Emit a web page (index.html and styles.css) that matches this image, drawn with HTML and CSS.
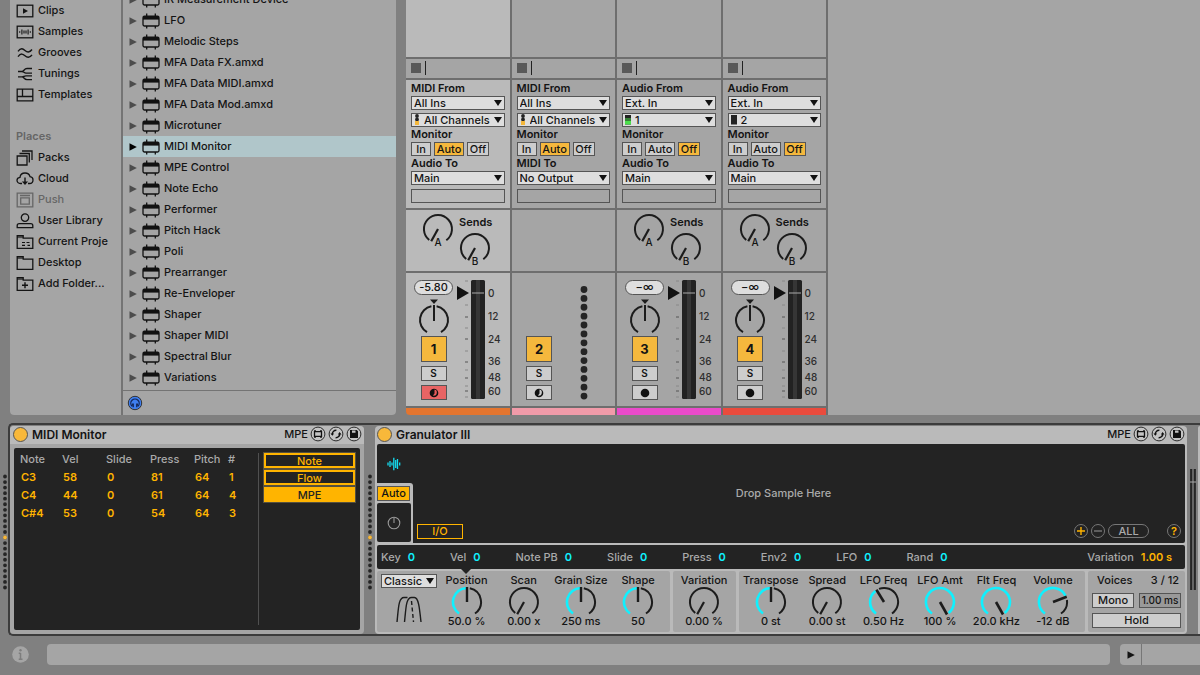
FILE: index.html
```html
<!DOCTYPE html>
<html lang="en">
<head>
<meta charset="utf-8">
<title>Live Set</title>
<link rel="stylesheet" href="styles.css">
</head>
<body>
<svg class="defs" aria-hidden="true">
  <symbol id="i-dev" viewBox="0 0 18 16"><rect x="1" y="3.2" width="16" height="9.8" rx="1.5" fill="none" stroke="#111" stroke-width="1.3"/><path d="M1 3h16v3.6H1z" fill="#111"/><path d="M4.7 .6v3M13.3 .6v3M4.7 13v2.4M13.3 13v2.4" stroke="#111" stroke-width="1.3"/></symbol>
  <symbol id="i-tri" viewBox="0 0 8 8"><path d="M.5 .2 7.8 4 .5 7.8z" fill="currentColor"/></symbol>
  <symbol id="i-clips" viewBox="0 0 18 16"><rect x="1.2" y="2.2" width="15.6" height="11.6" fill="none" stroke="currentColor" stroke-width="1.3"/><path d="M7 5.2 12 8l-5 2.8z" fill="currentColor"/></symbol>
  <symbol id="i-samples" viewBox="0 0 18 16"><rect x="1.2" y="2.2" width="15.6" height="11.6" fill="none" stroke="currentColor" stroke-width="1.3"/><path d="M3.7 7.3v1.4M5.9 5.5v5M8 6.5v3M10 6.5v3M12.1 5.5v5M14.3 7.3v1.4" stroke="currentColor" stroke-width="1.1"/></symbol>
  <symbol id="i-grooves" viewBox="0 0 18 16"><path d="M2 6.4c3-4 5-2.700 7-.9s4.500 2.500 7-1M2 11.700c3-4 5-2.700 7-.9s4.500 2.500 7-1" fill="none" stroke="currentColor" stroke-width="1.4"/></symbol>
  <symbol id="i-tunings" viewBox="0 0 18 16"><path d="M2 5.500h4c2 0 2-3 5-3h5M6 5.500c2 0 2 1.700 4 1.700h6M2 10.800h4c2 0 2-1 4-1h6M6 10.800c2 0 2 2.900 5 2.900h5" fill="none" stroke="currentColor" stroke-width="1.300"/></symbol>
  <symbol id="i-templates" viewBox="0 0 18 16"><path d="M1.200 2.200h15.600v11.600H1.200zM1.200 9.500h15.600M6.500 2.200v7.300" fill="none" stroke="currentColor" stroke-width="1.300"/></symbol>
  <symbol id="i-packs" viewBox="0 0 18 16"><path d="M1.200 6h9.800v9H1.200zM3.500 3.500h9.800v9M6 1h10v9" fill="none" stroke="currentColor" stroke-width="1.300"/></symbol>
  <symbol id="i-cloud" viewBox="0 0 18 16"><path d="M6 12.500H4.500C2.500 12.500 1 11 1 9.300 1 7.600 2.200 6.500 4 6.300 4.300 3.500 6.500 2 9 2c2.400 0 4.400 1.300 5 3.700 1.800.2 3 1.500 3 3.300s-1.300 3.500-3.500 3.500H12" fill="none" stroke="currentColor" stroke-width="1.300"/><path d="M9 6.500v5" stroke="currentColor" stroke-width="1.400"/><path d="M5.900 10.500h6.200L9 14z" fill="currentColor"/></symbol>
  <symbol id="i-push" viewBox="0 0 18 16"><path d="M1.200 1.200h15.600v13.600H1.200zM4.700 5.800h8.600v6.400H4.700zM4 3.500h10" fill="none" stroke="currentColor" stroke-width="1.300"/></symbol>
  <symbol id="i-user" viewBox="0 0 18 16"><circle cx="9" cy="4.600" r="3.700" fill="none" stroke="currentColor" stroke-width="1.300"/><path d="M1.200 14.600v-2c0-1.300 1-2 2-2h11.600c1 0 2 .7 2 2v2z" fill="none" stroke="currentColor" stroke-width="1.300"/></symbol>
  <symbol id="i-folder" viewBox="0 0 18 16"><path d="M1.200 1.700h6v2.400h9.600v10.200H1.200z" fill="none" stroke="currentColor" stroke-width="1.300"/><path d="M1 1.500h6v2.600H1z" fill="currentColor" opacity=".6"/></symbol>
  <symbol id="i-hot" viewBox="0 0 16 16"><circle cx="8" cy="8" r="6.900" fill="#c4c4c4" stroke="#2b2b2b" stroke-width="1"/><path d="M4.500 5.700h7v4.600h-7z" fill="none" stroke="#111" stroke-width="1.300"/><path d="M5 4v1.800M11 4v1.800M5 10.200V12M11 10.200V12" stroke="#111" stroke-width="1.400"/></symbol>
  <symbol id="i-swap" viewBox="0 0 16 16"><circle cx="8" cy="8" r="6.900" fill="#c4c4c4" stroke="#2b2b2b" stroke-width="1"/><path d="M4.300 8.500C4 6 6 4.200 8.400 4.300M11.700 7.500c.3 2.500-1.700 4.300-4.100 4.200" fill="none" stroke="#111" stroke-width="1.400"/><path d="M2.500 7.500h3.600L4.400 9.800zM9.900 8.500h3.600l-2-2.400z" fill="#111"/></symbol>
  <symbol id="i-save" viewBox="0 0 16 16"><circle cx="8" cy="8" r="6.900" fill="#c4c4c4" stroke="#2b2b2b" stroke-width="1"/><path d="M4 4h6.700L12 5.300V12H4z" fill="#111"/><path d="M6 4.500h3.500v2.200H6z" fill="#c4c4c4"/></symbol>
  <symbol id="k-min" viewBox="-16 -16 32 32"><path d="M-8.800 11A14 14 0 1 1 8.300 11.300" fill="none" stroke="#1c1c1c" stroke-width="2"/><path d="M0 0-6.800 12.200" stroke="#1c1c1c" stroke-width="2.200"/></symbol>
  <symbol id="k-mid" viewBox="-16 -16 32 32"><path d="M-8 11.500A14 14 0 0 1-.5-14" fill="none" stroke="#0ff1ff" stroke-width="2.600"/><path d="M2.800-13.700A14 14 0 0 1 8 11.500" fill="none" stroke="#1c1c1c" stroke-width="2"/><path d="M0 0v-15" stroke="#1c1c1c" stroke-width="2.400"/></symbol>
  <symbol id="k-freq" viewBox="-16 -16 32 32"><path d="M-8 11.500A14 14 0 0 1-8.500-11" fill="none" stroke="#0ff1ff" stroke-width="2.600"/><path d="M-5-13.100A14 14 0 0 1 8 11.500" fill="none" stroke="#1c1c1c" stroke-width="2"/><path d="M0 0-7.600-12.300" stroke="#1c1c1c" stroke-width="2.600"/></symbol>
  <symbol id="k-max" viewBox="-16 -16 32 32"><path d="M-8 11.500A14 14 0 1 1 8.600 11" fill="none" stroke="#0ff1ff" stroke-width="2.600"/><path d="M0 0 7 12.500" stroke="#1c1c1c" stroke-width="2.600"/></symbol>
  <symbol id="k-vol" viewBox="-16 -16 32 32"><path d="M-8 11.500A14 14 0 1 1 12.500-6.200" fill="none" stroke="#0ff1ff" stroke-width="2.600"/><path d="M13.900-2A14 14 0 0 1 8 11.500" fill="none" stroke="#1c1c1c" stroke-width="2"/><path d="M0 0 13.700-5.300" stroke="#1c1c1c" stroke-width="2.600"/></symbol>
  <symbol id="k-pan" viewBox="-16 -21 32 36"><path d="M-4-20.500h8L0-16z" fill="#1c1c1c"/><path d="M-7 12.200A14 14 0 0 1-2.600-13.700M2.600-13.700A14 14 0 0 1 7 12.200" fill="none" stroke="#1c1c1c" stroke-width="2"/><path d="M0 1v-16" stroke="#1c1c1c" stroke-width="2"/></symbol>
  <symbol id="fader" viewBox="0 0 30 122"><path d="M0 7v14l12-7z" fill="#111"/><path d="M8 2h3M8 26h3M8 49h3M8 72h3M8 91h3M8 107h3M8 118h3" stroke="#888"/><path d="M8 38h3M8 60h3M8 83h3M8 99h3M8 112h3" stroke="#555"/><rect x="14" y="1" width="14" height="119" rx="1.500" fill="#222"/><path d="M20 1v119M22 1v119" stroke="#555" stroke-width=".8"/><path d="M15 14h12" stroke="#aaa"/></symbol>
  <symbol id="dots" viewBox="0 0 6 116"><path d="M3 2.500v112" stroke="#252525" stroke-width="3.800" stroke-linecap="round" stroke-dasharray="0 5.550"/><circle cx="3" cy="63.500" r="2" fill="#f8b83a"/></symbol>
</svg>

<main class="top">
  <div class="browser">
    <nav class="places">
      <a href="#"><svg><use href="#i-clips"/></svg>Clips</a>
      <a href="#"><svg><use href="#i-samples"/></svg>Samples</a>
      <a href="#"><svg><use href="#i-grooves"/></svg>Grooves</a>
      <a href="#"><svg><use href="#i-tunings"/></svg>Tunings</a>
      <a href="#"><svg><use href="#i-templates"/></svg>Templates</a>
      <h2>Places</h2>
      <a href="#"><svg><use href="#i-packs"/></svg>Packs</a>
      <a href="#"><svg><use href="#i-cloud"/></svg>Cloud</a>
      <a href="#" class="dim"><svg><use href="#i-push"/></svg>Push</a>
      <a href="#"><svg><use href="#i-user"/></svg>User Library</a>
      <a href="#"><svg viewBox="0 0 18 16"><use href="#i-folder"/><path d="M6 8.500h3M10.500 8.500h3M6 11.300h3M11.500 11.300h2.500" stroke="#111" stroke-width="1.200"/></svg>Current Proje</a>
      <a href="#"><svg><use href="#i-folder"/></svg>Desktop</a>
      <a href="#"><svg viewBox="0 0 18 16"><use href="#i-folder"/><path d="M6 9.300h6M9 6.300v6" stroke="#111" stroke-width="1.400"/></svg>Add Folder...</a>
    </nav>
    <section class="content">
      <ul class="files">
        <li><svg class="tri"><use href="#i-tri"/></svg><svg><use href="#i-dev"/></svg>IR Measurement Device</li>
        <li><svg class="tri"><use href="#i-tri"/></svg><svg><use href="#i-dev"/></svg>LFO</li>
        <li><svg class="tri"><use href="#i-tri"/></svg><svg><use href="#i-dev"/></svg>Melodic Steps</li>
        <li><svg class="tri"><use href="#i-tri"/></svg><svg><use href="#i-dev"/></svg>MFA Data FX.amxd</li>
        <li><svg class="tri"><use href="#i-tri"/></svg><svg><use href="#i-dev"/></svg>MFA Data MIDI.amxd</li>
        <li><svg class="tri"><use href="#i-tri"/></svg><svg><use href="#i-dev"/></svg>MFA Data Mod.amxd</li>
        <li><svg class="tri"><use href="#i-tri"/></svg><svg><use href="#i-dev"/></svg>Microtuner</li>
        <li class="selected"><svg class="tri"><use href="#i-tri"/></svg><svg><use href="#i-dev"/></svg>MIDI Monitor</li>
        <li><svg class="tri"><use href="#i-tri"/></svg><svg><use href="#i-dev"/></svg>MPE Control</li>
        <li><svg class="tri"><use href="#i-tri"/></svg><svg><use href="#i-dev"/></svg>Note Echo</li>
        <li><svg class="tri"><use href="#i-tri"/></svg><svg><use href="#i-dev"/></svg>Performer</li>
        <li><svg class="tri"><use href="#i-tri"/></svg><svg><use href="#i-dev"/></svg>Pitch Hack</li>
        <li><svg class="tri"><use href="#i-tri"/></svg><svg><use href="#i-dev"/></svg>Poli</li>
        <li><svg class="tri"><use href="#i-tri"/></svg><svg><use href="#i-dev"/></svg>Prearranger</li>
        <li><svg class="tri"><use href="#i-tri"/></svg><svg><use href="#i-dev"/></svg>Re-Enveloper</li>
        <li><svg class="tri"><use href="#i-tri"/></svg><svg><use href="#i-dev"/></svg>Shaper</li>
        <li><svg class="tri"><use href="#i-tri"/></svg><svg><use href="#i-dev"/></svg>Shaper MIDI</li>
        <li><svg class="tri"><use href="#i-tri"/></svg><svg><use href="#i-dev"/></svg>Spectral Blur</li>
        <li><svg class="tri"><use href="#i-tri"/></svg><svg><use href="#i-dev"/></svg>Variations</li>
      </ul>
      <div class="preview">
        <button class="bare" aria-label="Preview"><svg width="16" height="16" viewBox="0 0 16 16"><circle cx="8" cy="8" r="6.700" fill="#3f7ff0" stroke="#333" stroke-width="1"/><path d="M5 11.200A4.200 4.200 0 1 1 11 11.200" fill="none" stroke="#14285a" stroke-width="1.300"/><path d="M4.700 8.500h2.200v3.800H5.600zM11.300 8.500H9.100v3.800h1.300z" fill="#14285a"/></svg></button>
      </div>
    </section>
  </div>

  <section class="session">
    <div class="tracks">
      <article class="track active">
        <div class="slots"></div>
        <div class="status"><i class="stop"></i><i class="caret"></i></div>
        <div class="io">
          <label for="t1a">MIDI From</label>
          <span class="pick"><select id="t1a"><option>All Ins</option></select></span>
          <span class="pick chan"><svg viewBox="0 0 6 11"><circle cx="3" cy="2" r="1.900" fill="#222"/><circle cx="3" cy="5.500" r="1.900" fill="#222"/><path d="M1 7h4v4H1z" fill="#f3b73c"/></svg><select aria-label="Input channel"><option>All Channels</option></select></span>
          <h3>Monitor</h3>
          <div class="monitor"><button>In</button><button class="on">Auto</button><button>Off</button></div>
          <label for="t1b">Audio To</label>
          <span class="pick"><select id="t1b"><option>Main</option></select></span>
          <div class="empty"></div>
        </div>
        <div class="sends">
          <svg class="send" viewBox="-16 -16 32 36"><use href="#k-min" x="-16" y="-16" width="32" height="32"/><text x="0" y="17">A</text></svg>
          <div><h3>Sends</h3><svg class="send" viewBox="-16 -16 32 36"><use href="#k-min" x="-16" y="-16" width="32" height="32"/><text x="0" y="17">B</text></svg></div>
        </div>
        <div class="mixer">
          <div class="strip"><output class="pill">-5.80</output><svg class="pan"><use href="#k-pan"/></svg><button class="num">1</button><button>S</button><button class="armed" aria-label="Arm"><svg viewBox="0 0 10 10"><circle cx="5" cy="5" r="4.300" fill="#111"/><path d="M5.500 5.500V1.500C7.500 1.800 8.300 3.500 7.700 5.500 7.300 7.500 5.500 8 4 7.500z" fill="#e65a5a"/></svg></button></div>
          <svg class="fader"><use href="#fader"/></svg>
          <ol class="scale"><li>0</li><li>12</li><li>24</li><li>36</li><li>48</li><li>60</li></ol>
        </div>
        <div class="hue orange"></div>
      </article>

      <article class="track">
        <div class="slots"></div>
        <div class="status"><i class="stop"></i><i class="caret"></i></div>
        <div class="io">
          <label for="t2a">MIDI From</label>
          <span class="pick"><select id="t2a"><option>All Ins</option></select></span>
          <span class="pick chan"><svg viewBox="0 0 6 11"><circle cx="3" cy="2" r="1.900" fill="#222"/><circle cx="3" cy="5.500" r="1.900" fill="#222"/><path d="M1 7h4v4H1z" fill="#f3b73c"/></svg><select aria-label="Input channel"><option>All Channels</option></select></span>
          <h3>Monitor</h3>
          <div class="monitor"><button>In</button><button class="on">Auto</button><button>Off</button></div>
          <label for="t2b">MIDI To</label>
          <span class="pick"><select id="t2b"><option>No Output</option></select></span>
          <div class="empty"></div>
        </div>
        <div class="sends"></div>
        <div class="mixer">
          <div class="strip"><button class="num">2</button><button>S</button><button aria-label="Arm"><svg viewBox="0 0 10 10"><circle cx="5" cy="5" r="4.300" fill="#111"/><path d="M5.500 5.500V1.500C7.500 1.800 8.300 3.500 7.700 5.500 7.300 7.500 5.500 8 4 7.500z" fill="#ccc"/></svg></button></div>
          <svg class="notes" viewBox="0 0 8 116"><path d="M4 4.500v108" stroke="#252525" stroke-width="6.800" stroke-linecap="round" stroke-dasharray="0 8.880"/></svg>
        </div>
        <div class="hue pink"></div>
      </article>

      <article class="track">
        <div class="slots"></div>
        <div class="status"><i class="stop"></i><i class="caret"></i></div>
        <div class="io">
          <label for="t3a">Audio From</label>
          <span class="pick"><select id="t3a"><option>Ext. In</option></select></span>
          <span class="pick chan"><svg viewBox="0 0 6 11"><path d="M0 1h6v9.500H0z" fill="#222"/><path d="M0 4.500h6v1H0zM0 6.500h6v4H0z" fill="#4be04b"/></svg><select aria-label="Input channel"><option>1</option></select></span>
          <h3>Monitor</h3>
          <div class="monitor"><button>In</button><button>Auto</button><button class="on">Off</button></div>
          <label for="t3b">Audio To</label>
          <span class="pick"><select id="t3b"><option>Main</option></select></span>
          <div class="empty"></div>
        </div>
        <div class="sends">
          <svg class="send" viewBox="-16 -16 32 36"><use href="#k-min" x="-16" y="-16" width="32" height="32"/><text x="0" y="17">A</text></svg>
          <div><h3>Sends</h3><svg class="send" viewBox="-16 -16 32 36"><use href="#k-min" x="-16" y="-16" width="32" height="32"/><text x="0" y="17">B</text></svg></div>
        </div>
        <div class="mixer">
          <div class="strip"><output class="pill">−∞</output><svg class="pan"><use href="#k-pan"/></svg><button class="num">3</button><button>S</button><button aria-label="Arm"><svg viewBox="0 0 10 10"><circle cx="5" cy="5" r="4.300" fill="#111"/></svg></button></div>
          <svg class="fader"><use href="#fader"/></svg>
          <ol class="scale"><li>0</li><li>12</li><li>24</li><li>36</li><li>48</li><li>60</li></ol>
        </div>
        <div class="hue magenta"></div>
      </article>

      <article class="track">
        <div class="slots"></div>
        <div class="status"><i class="stop"></i><i class="caret"></i></div>
        <div class="io">
          <label for="t4a">Audio From</label>
          <span class="pick"><select id="t4a"><option>Ext. In</option></select></span>
          <span class="pick chan"><svg viewBox="0 0 6 11"><path d="M0 1h6v9.500H0z" fill="#222"/></svg><select aria-label="Input channel"><option>2</option></select></span>
          <h3>Monitor</h3>
          <div class="monitor"><button>In</button><button>Auto</button><button class="on">Off</button></div>
          <label for="t4b">Audio To</label>
          <span class="pick"><select id="t4b"><option>Main</option></select></span>
          <div class="empty"></div>
        </div>
        <div class="sends">
          <svg class="send" viewBox="-16 -16 32 36"><use href="#k-min" x="-16" y="-16" width="32" height="32"/><text x="0" y="17">A</text></svg>
          <div><h3>Sends</h3><svg class="send" viewBox="-16 -16 32 36"><use href="#k-min" x="-16" y="-16" width="32" height="32"/><text x="0" y="17">B</text></svg></div>
        </div>
        <div class="mixer">
          <div class="strip"><output class="pill">−∞</output><svg class="pan"><use href="#k-pan"/></svg><button class="num">4</button><button>S</button><button aria-label="Arm"><svg viewBox="0 0 10 10"><circle cx="5" cy="5" r="4.300" fill="#111"/></svg></button></div>
          <svg class="fader"><use href="#fader"/></svg>
          <ol class="scale"><li>0</li><li>12</li><li>24</li><li>36</li><li>48</li><li>60</li></ol>
        </div>
        <div class="hue red"></div>
      </article>
    </div>
  </section>
</main>

<section class="rack">
  <svg class="dots"><use href="#dots"/></svg>
  <div class="chain">
    <article class="device monitor-device">
      <header><i class="power"></i><h2>MIDI Monitor</h2><span>MPE</span><button class="bare" aria-label="Parameters"><svg><use href="#i-hot"/></svg></button><button class="bare" aria-label="Hot-swap"><svg><use href="#i-swap"/></svg></button><button class="bare" aria-label="Save"><svg><use href="#i-save"/></svg></button></header>
      <div class="screen">
        <table>
          <thead><tr><th>Note</th><th>Vel</th><th>Slide</th><th>Press</th><th>Pitch</th><th>#</th></tr></thead>
          <tbody>
            <tr><td>C3</td><td>58</td><td>0</td><td>81</td><td>64</td><td>1</td></tr>
            <tr><td>C4</td><td>44</td><td>0</td><td>61</td><td>64</td><td>4</td></tr>
            <tr><td>C#4</td><td>53</td><td>0</td><td>54</td><td>64</td><td>3</td></tr>
          </tbody>
        </table>
        <div class="modes"><button>Note</button><button>Flow</button><button class="on">MPE</button></div>
      </div>
    </article>
    <div class="gutter"><svg class="dots"><use href="#dots"/></svg></div>
    <article class="device gran">
      <header><i class="power"></i><h2>Granulator III</h2><span>MPE</span><button class="bare" aria-label="Parameters"><svg><use href="#i-hot"/></svg></button><button class="bare" aria-label="Hot-swap"><svg><use href="#i-swap"/></svg></button><button class="bare" aria-label="Save"><svg><use href="#i-save"/></svg></button></header>
      <div class="display">
        <div class="tabs">
          <button class="bare wave" aria-label="Sample"><svg width="14" height="14" viewBox="0 0 14 14"><path d="M1 5.500v3M3 4v6M5 5.500v3M6.800 .8v12.400M8.700 3v8M10.500 2v10M12.700 5.500v3" stroke="#14dcf0" stroke-width="1.300"/></svg></button>
          <div class="tabbox">
            <button class="auto">Auto</button>
            <button class="bare envelope" aria-label="Envelope"><svg width="14" height="14" viewBox="0 0 14 14"><circle cx="7" cy="7" r="5.800" fill="none" stroke="#999" stroke-width="1.100"/><path d="M7 2v5" stroke="#999" stroke-width="1.100"/></svg></button>
          </div>
        </div>
        <button class="inout">I/O</button>
        <p>Drop Sample Here</p>
        <div class="tools"><button class="round gold" aria-label="Zoom in"><svg viewBox="0 0 10 10"><path d="M1 5h8M5 1v8" stroke="#ffb400" stroke-width="1.400"/></svg></button><button class="round" aria-label="Zoom out"><svg viewBox="0 0 10 10"><path d="M1 5h8" stroke="#999" stroke-width="1.200"/></svg></button><button class="all">ALL</button><button class="round help">?</button></div>
      </div>
      <div class="mods">
        <span>Key <b>0</b></span><span class="picked">Vel <b>0</b></span><span>Note PB <b>0</b></span><span>Slide <b>0</b></span><span>Press <b>0</b></span><span>Env2 <b>0</b></span><span>LFO <b>0</b></span><span>Rand <b>0</b></span>
        <span class="vary">Variation <b>1.00 s</b></span>
      </div>
      <div class="params">
        <section class="grains">
          <div class="engine">
            <span class="pick"><select aria-label="Engine"><option>Classic</option></select></span>
            <svg width="26" height="27" viewBox="0 0 26 27"><path d="M1 26C2.500 12 2.500 1.500 8 1.500h3.500M8.500 26C10 12 10 1.500 15.500 1.500h3C22.500 1.500 23.500 12 25 26" fill="none" stroke="#1c1c1c" stroke-width="1.400"/><path d="M15.500 5 17.500 26" stroke="#1c1c1c" stroke-width="1.400" stroke-dasharray="4 2.500"/></svg>
          </div>
          <div class="knob">Position<svg><use href="#k-mid"/></svg>50.0 %</div>
          <div class="knob">Scan<svg><use href="#k-min"/></svg>0.00 x</div>
          <div class="knob">Grain Size<svg><use href="#k-mid"/></svg>250 ms</div>
          <div class="knob">Shape<svg><use href="#k-mid"/></svg>50</div>
        </section>
        <section><div class="knob">Variation<svg><use href="#k-min"/></svg>0.00 %</div></section>
        <section>
          <div class="knob">Transpose<svg><use href="#k-mid"/></svg>0 st</div>
          <div class="knob">Spread<svg><use href="#k-min"/></svg>0.00 st</div>
          <div class="knob">LFO Freq<svg><use href="#k-freq"/></svg>0.50 Hz</div>
          <div class="knob">LFO Amt<svg><use href="#k-max"/></svg>100 %</div>
          <div class="knob">Flt Freq<svg><use href="#k-max"/></svg>20.0 kHz</div>
          <div class="knob">Volume<svg><use href="#k-vol"/></svg>-12 dB</div>
        </section>
        <section class="voices">
          <span>Voices</span><span class="count">3 / 12</span>
          <button>Mono</button><button class="time">1.00 ms</button>
          <button class="hold">Hold</button>
        </section>
      </div>
    </article>
    <div class="gutter"><svg width="6" height="121" viewBox="0 0 6 121"><path d="M1.200 0v121M4.800 0v121" stroke="#252525" stroke-width="2.200"/><path d="M0 13h6" stroke="#aaa"/></svg></div>
    <div class="next"></div>
  </div>
</section>

<footer>
  <svg width="17" height="17" viewBox="0 0 17 17"><circle cx="8.500" cy="8.500" r="8.300" fill="#a5a5a5"/><path d="M8.500 7v6.500M6.700 13.200h3.800M6.700 7.200h1.800" fill="none" stroke="#7d7d7d" stroke-width="1.500"/><circle cx="8.500" cy="4.300" r="1.200" fill="#7d7d7d"/></svg>
  <div class="info"></div>
  <div class="transport"><button class="bare" aria-label="Play"><svg class="tri"><use href="#i-tri"/></svg></button></div>
</footer>
</body>
</html>
```
FILE: styles.css
```css
* { box-sizing: border-box; }

body {
  margin: 0;
  height: 100vh;
  display: flex;
  flex-direction: column;
  overflow: hidden;
  background: #808080;
  color: #141414;
  font: 500 11px/21px Inter, "Liberation Sans", sans-serif;
}

h2, h3, p, ul, ol { margin: 0; padding: 0; list-style: none; font-size: inherit; }
svg { display: block; flex: none; }
.defs { position: absolute; width: 0; height: 0; }

button, select, output { font: inherit; color: inherit; }
button {
  padding: 0;
  border: 1px solid #555;
  border-radius: 0;
  background: #cdcdcd;
  display: flex;
  align-items: center;
  justify-content: center;
  white-space: nowrap;
}
.bare { border: 0; background: none; }

/* Browser */
.top { flex: 1; min-height: 0; display: flex; gap: 10px; padding-left: 10px; }
.browser {
  width: 386px;
  flex: none;
  display: flex;
  gap: 2px;
  background: #747474;
  border-radius: 0 0 4px 4px;
  overflow: hidden;
}
.places { width: 111px; flex: none; padding: 0 0 0 6px; background: #a5a5a5; }
.places a {
  display: flex;
  align-items: center;
  gap: 4px;
  height: 21px;
  color: inherit;
  text-decoration: none;
  white-space: nowrap;
}
.places a.dim, .places h2 { color: #666; }
.places svg { width: 18px; height: 16px; }
.places h2 { margin-top: 21px; font-weight: 600; }
.content { flex: 1; display: flex; flex-direction: column; background: #a5a5a5; min-height: 0; }
.files {
  flex: 1;
  min-height: 0;
  overflow: hidden;
  display: flex;
  flex-direction: column;
  justify-content: flex-end;
  padding-bottom: 2px;
}
.files li { flex: none; display: flex; align-items: center; height: 21px; padding-left: 6px; }
.files svg { width: 18px; height: 16px; margin-right: 4px; }
.files .tri { width: 8px; height: 8px; margin-right: 5px; color: #4c4c4c; }
.files .selected { background: #b0c6ca; }
.files .selected .tri { color: #000; }
.preview { height: 25px; padding: 4px; border-top: 1px solid #747474; }

/* Session */
.session { flex: 1; min-width: 0; background: #a5a5a5; border-bottom-left-radius: 4px; overflow: hidden; }
.tracks {
  width: 422px;
  height: 100%;
  display: grid;
  grid-template-columns: repeat(4, 1fr);
  gap: 2px;
  padding-right: 2px;
  background: #6e6e6e;
}
.track { display: flex; flex-direction: column; gap: 2px; min-width: 0; }
.track > div { background: #a5a5a5; }
.track.active > div:not(.status) { background: #bababa; }
.slots { flex: 1; }
.status { height: 19px; display: flex; align-items: center; gap: 4px; padding: 0 0 1px 5px; }
.stop { width: 10px; height: 10px; background: #595959; }
.caret { width: 1px; height: 14px; background: #222; }
.io { height: 128px; padding: 1px 5px 0; display: flex; flex-direction: column; }
.io label, .io h3 { height: 15px; line-height: 15px; font-weight: 600; }
.pick { position: relative; display: block; height: 14px; border: 1px solid #555; background: #dedede; }
.pick::after {
  content: "";
  position: absolute;
  right: 2px;
  top: 3px;
  border: 4px solid transparent;
  border-top: 6px solid #111;
  border-bottom: 0;
  pointer-events: none;
}
.pick select {
  appearance: none;
  width: 100%;
  height: 12px;
  padding: 0 0 0 2px;
  border: 0;
  background: none;
  line-height: 12px;
  display: block;
}
.chan { display: flex; gap: 2px; margin-top: 3px; padding-left: 2px; }
.chan svg { width: 6px; height: 11px; }
.monitor { display: flex; gap: 3px; }
.monitor button { width: 20px; height: 14px; line-height: 12px; }
.monitor button:nth-child(2) { width: 30px; }
.monitor button:nth-child(3) { width: 22px; }
.monitor .on { background: #f5b83d; }
.empty { height: 14px; margin-top: 4px; border: 1px solid #555; }
.sends { height: 61px; display: flex; gap: 5px; padding: 3px 0 0 16px; }
.sends h3 { height: 19px; line-height: 18px; font-weight: 600; }
.send { width: 32px; height: 36px; }
.send text { font-size: 10px; text-anchor: middle; fill: #141414; }
.mixer { height: 133px; padding: 6px 0 0 8px; display: flex; }
.strip { width: 39px; height: 121px; display: flex; flex-direction: column; align-items: center; justify-content: flex-end; margin-right: 4px; }
.strip button { width: 26px; height: 15px; margin-top: 4px; line-height: 13px; font-weight: 600; font-size: 10px; }
.strip button svg { width: 10px; height: 10px; }
.strip .num { height: 26px; margin-top: 0; background: #f5b83d; font-size: 13px; font-weight: 700; }
.strip .armed { background: #e86464; }
.pill { width: 39px; height: 15px; border: 1px solid #555; border-radius: 8px; background: #dedede; text-align: center; line-height: 13px; }
.pan { width: 32px; height: 36px; margin: 4px 0 1px; }
.fader { width: 30px; height: 122px; }
.scale { margin-left: 1px; color: #2e2e2e; font-size: 10px; line-height: 12px; padding-top: 8px; }
.scale li { height: 23px; }
.scale li:nth-child(3) { height: 22px; }
.scale li:nth-child(4) { height: 16px; }
.scale li:nth-child(5) { height: 14px; }
.notes { width: 8px; height: 116px; margin: 6px 0 0 17px; }
.hue { height: 7px; }
.track .hue.orange, .track.active .hue.orange:not(.status) { background: #e4752f; }
.track .hue.pink { background: #f19ba9; }
.track .hue.magenta { background: #ea4bcb; }
.track .hue.red { background: #ea4b3d; }

/* Device chain */
.rack { display: flex; margin-top: 8px; padding-left: 2px; }
.dots { width: 6px; height: 116px; margin-top: 51px; }
.chain {
  flex: 1;
  min-width: 0;
  display: flex;
  height: 213px;
  padding-top: 1px;
  border: 2px solid #3c3c3c;
  border-right: 0;
  border-radius: 5px 0 0 5px;
}
.gutter { width: 11px; display: flex; justify-content: center; }
.gutter svg { margin-top: 48px; }
.gutter svg:not(.dots) { margin-top: 43px; }
.next { width: 2px; background: #bababa; border-top-left-radius: 3px; }
.device { border-radius: 4px; background: #bababa; overflow: hidden; display: flex; flex-direction: column; }
.device header { height: 18px; flex: none; display: flex; align-items: center; gap: 2px; padding: 0 2px 2px 3px; }
.device header h2 { flex: 1; margin-left: 2px; font-size: 12px; font-weight: 600; }
.device header svg { width: 16px; height: 16px; }
.power { width: 15px; height: 15px; border: 1px solid #555; border-radius: 50%; background: #f8b83a; }
.monitor-device { width: 354px; flex: none; background: #a5a5a5; }
.monitor-device header { background: #bababa; }
.screen {
  flex: 1;
  margin: 4px;
  padding: 2px 5px 5px 4px;
  display: flex;
  border-radius: 2px;
  background: #232323;
}
.screen table { flex: 1; width: 100%; table-layout: fixed; border-collapse: collapse; height: 72px; margin-right: 9px; }
.screen th, .screen td { height: 18px; padding: 0 0 0 3px; line-height: 17px; text-align: left; }
.screen th { width: 44px; color: #aaa; font-weight: 500; padding-left: 2px; }
.screen th:nth-child(1) { width: 42px; }
.screen th:nth-child(5) { width: 34px; }
.screen th:nth-child(6) { width: auto; }
.screen td { color: #ffb400; font-weight: 600; }
.modes { width: 97px; flex: none; margin-top: 3px; padding-left: 5px; border-left: 1px solid #505050; display: flex; flex-direction: column; gap: 2px; }
.modes button { height: 15px; border: 2px solid #ffb400; outline: 1px solid #55503f; background: none; color: #ffb400; line-height: 12px; }
.modes .on { background: #ffb400; color: #232323; }

/* Granulator */
.gran { flex: 1; min-width: 0; padding: 0 2px; }
.gran header { padding: 0 0 2px 0; }
.display { height: 99px; display: flex; background: #232323; border-radius: 2px; }
.tabs { width: 36px; display: flex; flex-direction: column; }
.wave, .envelope { width: 34px; height: 39px; }
.tabbox { flex: 1; padding-top: 3px; background: #bababa; border-top-right-radius: 3px; }
.auto { width: 33px; height: 15px; background: #ffb400; line-height: 13px; }
.envelope { margin-top: 2px; background: #232323; border-radius: 2px; }
.inout { align-self: flex-end; width: 46px; height: 15px; margin: 0 0 4px 4px; border-color: #ffb400; background: none; color: #ffb400; }
.display p { flex: 1; align-self: center; text-align: center; padding-left: 30px; color: #aaa; }
.tools { align-self: flex-end; display: flex; gap: 3px; margin: 0 4px 5px 0; }
.tools button { height: 14px; background: none; border-color: #777; border-radius: 8px; color: #aaa; }
.tools .round { width: 14px; }
.round svg { width: 10px; height: 10px; }
.tools .all { width: 41px; }
.tools .help { margin-left: 15px; color: #ffb400; font-weight: 600; }
.mods { height: 24px; margin-top: 2px; padding: 0 13px 0 4px; display: flex; gap: 35px; background: #232323; border-radius: 2px; color: #aaa; line-height: 24px; white-space: nowrap; }
.mods b { margin-left: 4px; color: #0ff1ff; font-weight: 600; }
.mods .vary { margin-left: auto; }
.mods .vary b { color: #ffb400; }
.picked { position: relative; }
.picked::after { content: ""; position: absolute; left: 11px; top: 24px; border: 5px solid transparent; border-top-color: #232323; border-bottom: 0; }
.params { flex: 1; display: grid; grid-template-columns: 293fr 63fr 347fr 97fr; gap: 3px; margin: 2px 0 2px; }
.params section { display: flex; padding: 2px 4px 0; border-radius: 2px; background: #a5a5a5; min-width: 0; }
.params .grains { padding-right: 3px; }
.knob { flex: 1 1 0; min-width: 0; display: flex; flex-direction: column; align-items: center; line-height: 14px; white-space: nowrap; }
.knob svg { width: 32px; height: 32px; margin: -1px 0 -4px; }
.engine { width: 57px; padding-right: 1px; display: flex; flex-direction: column; align-items: center; }
.engine .pick { width: 100%; margin: 1px 0 8px; }
.params .voices { display: grid; grid-template-columns: minmax(0, 1fr) minmax(0, 1fr); grid-auto-rows: 15px; gap: 5px; line-height: 15px; }
.voices span { padding-left: 5px; }
.voices .count { padding: 0 2px 0 0; text-align: right; }
.voices .time { background: #999; font-size: 10px; }
.voices .hold { grid-column: 1 / 3; }

/* Status bar */
footer { display: flex; align-items: center; height: 39px; padding: 0 0 2px 12px; }
.info { flex: 1; height: 21px; margin: 0 10px 0 18px; border-radius: 4px; background: #a5a5a5; }
.transport { width: 80px; height: 21px; border-radius: 4px 0 0 4px; background: #a5a5a5; }
.transport button { width: 22px; height: 21px; border-right: 1px solid #777; }
.transport .tri { width: 8px; height: 8px; }
```
